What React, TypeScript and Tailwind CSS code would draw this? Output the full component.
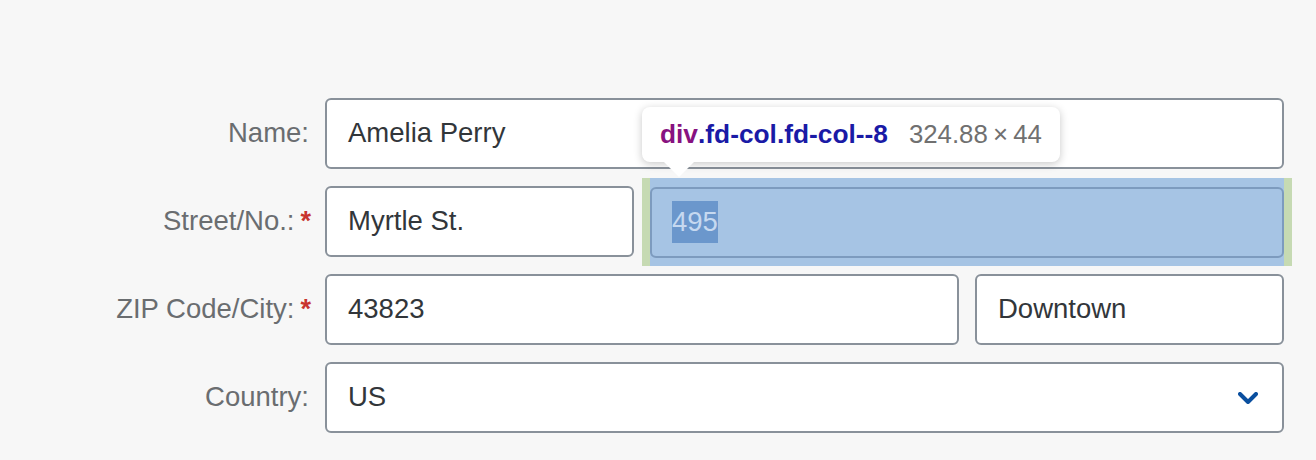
import React from "react";

const FONT = { fontFamily: '"Liberation Sans", Arial, sans-serif' };

function Label({ text, required }: { text: string; required?: boolean }) {
  return (
    <div className="w-[317px] shrink-0 pr-2 flex justify-end items-center text-[27.5px] text-[#6a6d70]">
      <span>{text}</span>
      {required && (
        <span className="ml-[6px] -mr-[2px] font-bold text-[27px] text-[#c8342e] leading-none">*</span>
      )}
    </div>
  );
}

function Field({ value, children }: { value: string; children?: React.ReactNode }) {
  return (
    <div className="h-[71px] w-full flex items-center justify-between rounded-[6px] border-2 border-[#89919a] bg-white pl-[21px] pr-[24px] text-[27.5px] text-[#32363a]">
      <span>{value}</span>
      {children}
    </div>
  );
}

function Inspector() {
  return (
    <div className="absolute left-0 top-[-71px] z-10 w-[418px] h-[55px] rounded-[8px] bg-white shadow-[0_2px_8px_rgba(0,0,0,0.22)] flex items-center pl-[18px] whitespace-nowrap">
      <span className="font-bold text-[26.3px] text-[#881280]">div</span>
      <span className="font-bold text-[26.3px] text-[#1a1aa6]">.fd-col.fd-col--8</span>
      <span className="ml-[21px] text-[25.8px] text-[#707070]">324.88{"\u2009"}×{"\u2009"}44</span>
      <svg className="absolute left-[21px] top-[54px]" width="32" height="17" viewBox="0 0 32 17">
        <polygon points="0,0 32,0 16,16" fill="#ffffff" />
      </svg>
    </div>
  );
}

export default function App() {
  return (
    <div style={FONT} className="w-full h-[460px] bg-[#f7f7f7] pt-[89px] overflow-hidden">
      <div className="flex h-[88px] items-center">
        <Label text="Name:" />
        <div className="w-[975px] px-2">
          <Field value="Amelia Perry" />
        </div>
      </div>

      <div className="flex h-[88px] items-center">
        <Label text="Street/No.:" required />
        <div className="w-[975px] flex h-full">
          <div className="w-[325px] px-2 flex items-center">
            <Field value="Myrtle St." />
          </div>
          <div className="relative w-[650px] h-full px-2 bg-[#c6dab3] mt-[1px]">
            <div className="h-full bg-[#a6c4e4] flex items-center">
              <div className="h-[71px] w-full flex items-center rounded-[6px] border-2 border-[#7d9bbe] pl-[20px] text-[27.5px]">
                <span className="bg-[#6b97cc] text-[#c6d9f0]">495</span>
              </div>
            </div>
            <Inspector />
          </div>
        </div>
      </div>

      <div className="flex h-[88px] items-center">
        <Label text="ZIP Code/City:" required />
        <div className="w-[975px] flex">
          <div className="w-[650px] px-2">
            <Field value="43823" />
          </div>
          <div className="w-[325px] px-2">
            <Field value="Downtown" />
          </div>
        </div>
      </div>

      <div className="flex h-[88px] items-center">
        <Label text="Country:" />
        <div className="w-[975px] px-2">
          <Field value="US">
            <svg width="20" height="12" viewBox="0 0 20 12" className="mt-[1px]">
              <polyline points="2,2 10,10 18,2" fill="none" stroke="#0a4f9f" strokeWidth="4" strokeLinecap="round" strokeLinejoin="round" />
            </svg>
          </Field>
        </div>
      </div>
    </div>
  );
}
